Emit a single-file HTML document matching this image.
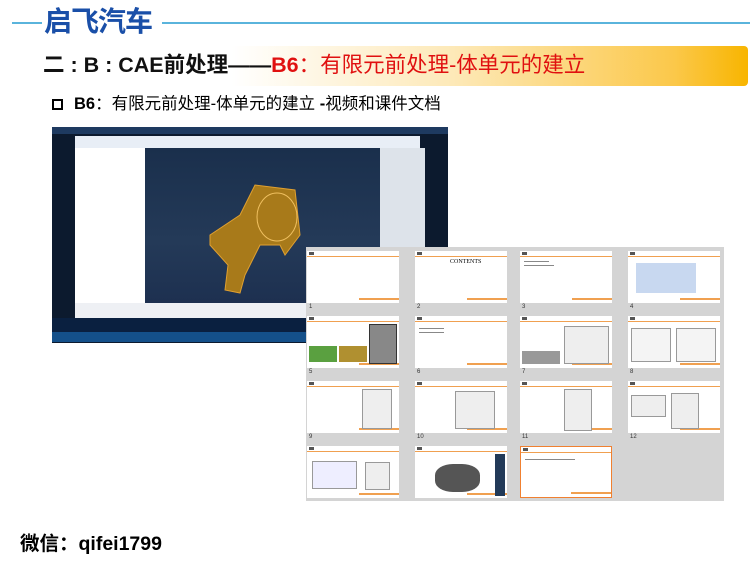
<!DOCTYPE html>
<html><head><meta charset="utf-8"><style>
*{margin:0;padding:0;box-sizing:border-box}
body{width:750px;height:563px;background:#fff;position:relative;overflow:hidden;font-family:"Liberation Sans","Noto Sans CJK SC",sans-serif}
.a{position:absolute}
.slide{position:absolute;width:92px;height:52px;background:#fff;overflow:hidden}
.slide .h{position:absolute;left:0;top:0;width:100%;height:6px;border-bottom:1px solid #f0a050}
.slide .h i{position:absolute;left:2px;top:1px;width:5px;height:3px;background:#555}
.slide .f{position:absolute;right:0;bottom:3px;width:40px;height:2px;background:#f0a050}
.slide .l{position:absolute;left:4px;height:1px;background:#888}
.num{position:absolute;font-size:6px;color:#333}
</style></head><body>
<div class="a" style="left:12px;top:22px;width:30px;height:2px;background:#5ab4dc"></div>
<div class="a" style="left:162px;top:22px;width:588px;height:2px;background:#5ab4dc"></div>
<div class="a" style="left:44px;top:5px;font-size:28px;font-weight:bold;color:#1a4fa8;letter-spacing:-1px;line-height:34px">启飞汽车</div>
<div class="a" style="left:10px;top:46px;width:738px;height:40px;border-radius:4px;background:linear-gradient(90deg,#fff 0%,#fff 30%,#fde9b8 60%,#fbc84a 90%,#f8b500 100%)"></div>
<div class="a" style="left:43px;top:51px;font-size:21.5px;font-weight:bold;line-height:28px;color:#111;white-space:nowrap">二 : B : CAE前处理——<span style="color:#e01010">B6</span><span style="color:#e01010;font-weight:normal">：有限元前处理-体单元的建立</span></div>
<div class="a" style="left:52px;top:99px;width:11px;height:11px;border:2px solid #000"></div>
<div class="a" style="left:74px;top:94px;font-size:16.5px;line-height:21px;color:#000;white-space:nowrap"><b>B6</b>：有限元前处理-体单元的建立 <b>-</b>视频和课件文档</div>
<!-- screenshot -->
<div class="a" style="left:52px;top:127px;width:396px;height:216px;background:#0c1a2e"></div>
<div class="a" style="left:52px;top:127px;width:396px;height:7px;background:#1e3a60"></div>
<div class="a" style="left:75px;top:136px;width:345px;height:12px;background:#e8eef6"></div>
<div class="a" style="left:75px;top:148px;width:70px;height:160px;background:#fff"></div>
<div class="a" style="left:145px;top:148px;width:235px;height:155px;background:linear-gradient(180deg,#1a2f4c,#243a58 60%,#1d3050)"></div>
<div class="a" style="left:380px;top:148px;width:45px;height:100px;background:#dde3ea"></div>
<div class="a" style="left:75px;top:303px;width:305px;height:15px;background:#eef0f4"></div>
<div class="a" style="left:52px;top:318px;width:396px;height:14px;background:#0a2040"></div>
<div class="a" style="left:52px;top:332px;width:396px;height:10px;background:#14508a"></div>
<svg class="a" style="left:200px;top:175px" width="110" height="120"><path d="M10 60 L40 40 L55 10 L95 15 L100 60 L85 80 L80 70 L60 70 L45 100 L40 118 L25 115 L28 90 L10 70Z" fill="#a87a1a" stroke="#e0a030"/><ellipse cx="77" cy="42" rx="20" ry="24" fill="none" stroke="#f0c060"/></svg>
<!-- thumbnails -->
<div class="a" style="left:306px;top:247px;width:418px;height:254px;background:#d4d4d4"></div>
<div class="slide" style="left:307px;top:251px"><div class="h"><i></i></div><div class="f"></div></div>
<div class="slide" style="left:415px;top:251px"><div class="h"><i></i></div><div class="f"></div><div class="a" style="left:35px;top:8px;font-size:6px;font-family:'Liberation Serif',serif">CONTENTS</div></div>
<div class="slide" style="left:520px;top:251px"><div class="h"><i></i></div><div class="f"></div><div class="l" style="top:10px;width:25px"></div><div class="l" style="top:14px;width:30px"></div></div>
<div class="slide" style="left:628px;top:251px"><div class="h"><i></i></div><div class="f"></div><div class="a" style="left:8px;top:12px;width:60px;height:30px;background:#c8d8f0"></div></div>
<div class="slide" style="left:307px;top:316px"><div class="h"><i></i></div><div class="f"></div><div class="a" style="left:2px;top:30px;width:28px;height:16px;background:#5aa040"></div><div class="a" style="left:32px;top:30px;width:28px;height:16px;background:#b09030"></div><div class="a" style="left:62px;top:8px;width:28px;height:40px;border:1px solid #333;background:#888"></div></div>
<div class="slide" style="left:415px;top:316px"><div class="h"><i></i></div><div class="f"></div><div class="l" style="top:12px;width:25px"></div><div class="l" style="top:16px;width:25px"></div></div>
<div class="slide" style="left:520px;top:316px"><div class="h"><i></i></div><div class="f"></div><div class="a" style="left:44px;top:10px;width:45px;height:38px;border:1px solid #999;background:#eee"></div><div class="a" style="left:2px;top:35px;width:38px;height:13px;background:#999"></div></div>
<div class="slide" style="left:628px;top:316px"><div class="h"><i></i></div><div class="f"></div><div class="a" style="left:3px;top:12px;width:40px;height:34px;border:1px solid #999;background:#f4f4f4"></div><div class="a" style="left:48px;top:12px;width:40px;height:34px;border:1px solid #999;background:#f4f4f4"></div></div>
<div class="slide" style="left:307px;top:381px"><div class="h"><i></i></div><div class="f"></div><div class="a" style="left:55px;top:8px;width:30px;height:40px;border:1px solid #999;background:#eee"></div></div>
<div class="slide" style="left:415px;top:381px"><div class="h"><i></i></div><div class="f"></div><div class="a" style="left:40px;top:10px;width:40px;height:38px;border:1px solid #999;background:#eee"></div></div>
<div class="slide" style="left:520px;top:381px"><div class="h"><i></i></div><div class="f"></div><div class="a" style="left:44px;top:8px;width:28px;height:42px;border:1px solid #999;background:#eee"></div></div>
<div class="slide" style="left:628px;top:381px"><div class="h"><i></i></div><div class="f"></div><div class="a" style="left:3px;top:14px;width:35px;height:22px;border:1px solid #999;background:#eee"></div><div class="a" style="left:43px;top:12px;width:28px;height:36px;border:1px solid #999;background:#eee"></div></div>
<div class="slide" style="left:307px;top:446px"><div class="h"><i></i></div><div class="f"></div><div class="a" style="left:5px;top:15px;width:45px;height:28px;border:1px solid #999;background:#eef"></div><div class="a" style="left:58px;top:16px;width:25px;height:28px;border:1px solid #999;background:#eee"></div></div>
<div class="slide" style="left:415px;top:446px"><div class="h"><i></i></div><div class="f"></div><div class="a" style="left:20px;top:18px;width:45px;height:28px;border-radius:40%;background:#555"></div><div class="a" style="left:80px;top:8px;width:10px;height:42px;background:#223a58"></div></div>
<div class="slide" style="left:520px;top:446px;border:1px solid #f08030"><div class="h"><i></i></div><div class="f"></div><div class="l" style="top:12px;width:50px"></div></div>
<div class="num" style="left:309px;top:304px">1</div><div class="num" style="left:417px;top:304px">2</div><div class="num" style="left:522px;top:304px">3</div><div class="num" style="left:630px;top:304px">4</div>
<div class="num" style="left:309px;top:369px">5</div><div class="num" style="left:417px;top:369px">6</div><div class="num" style="left:522px;top:369px">7</div><div class="num" style="left:630px;top:369px">8</div>
<div class="num" style="left:309px;top:434px">9</div><div class="num" style="left:417px;top:434px">10</div><div class="num" style="left:522px;top:434px">11</div><div class="num" style="left:630px;top:434px">12</div>
<div class="a" style="left:20px;top:532px;font-size:19.5px;font-weight:bold;line-height:25px;color:#000">微信：qifei1799</div>
</body></html>
